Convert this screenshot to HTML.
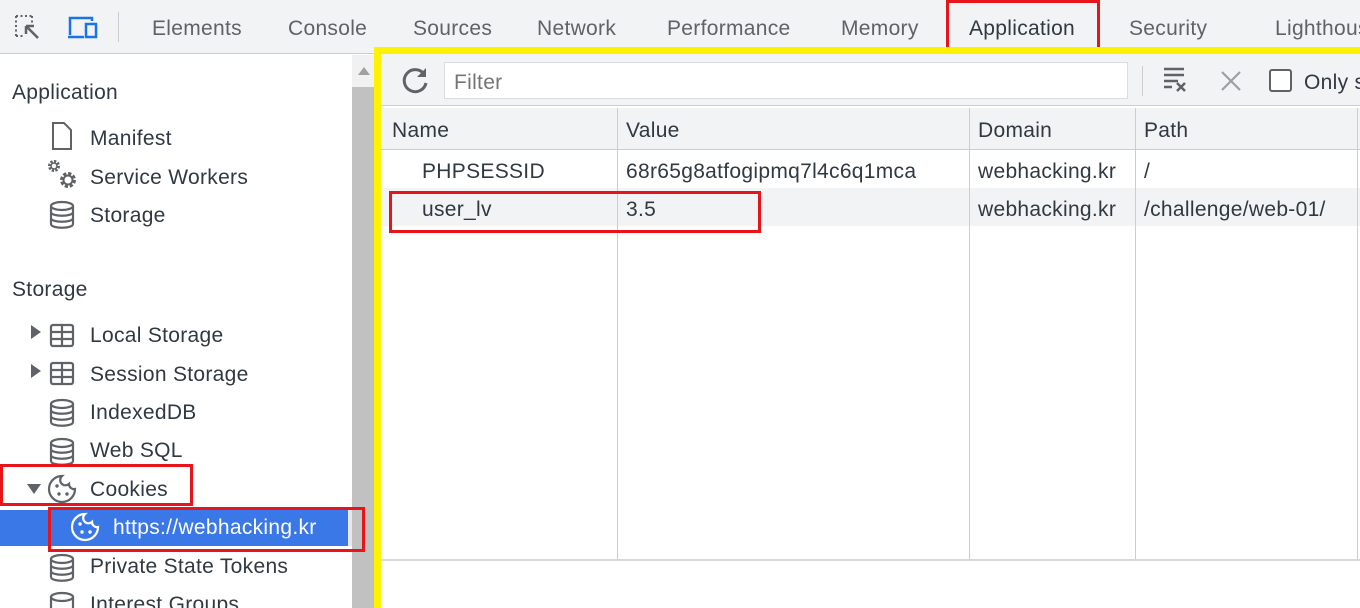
<!DOCTYPE html>
<html><head><style>
*{margin:0;padding:0;box-sizing:border-box}
html,body{width:1360px;height:608px;overflow:hidden}
body{background:#fff;font-family:"Liberation Sans",sans-serif;color:#303942;position:relative;font-size:21px;letter-spacing:0.3px}
.a{position:absolute;white-space:nowrap}
.tab{position:absolute;top:17px;font-size:21px;color:#5f6368}
.red{position:absolute;border:3px solid #e8141c}
svg{position:absolute}
</style></head><body>
<!-- top bar -->
<div class="a" style="left:0;top:0;width:1360px;height:54px;background:#f1f3f4;border-bottom:1px solid #cbcdd1"></div>
<svg style="left:14px;top:14px" width="30" height="28" viewBox="0 0 30 28"><path d="M2 2h16M2 2v20M2 22h8M18 2v8" stroke="#5f6368" stroke-width="2" stroke-dasharray="2 2.5" fill="none"/><path d="M12 12l12 12M12 12h8M12 12v8" stroke="#5f6368" stroke-width="2.5" fill="none"/></svg>
<svg style="left:66px;top:15px" width="34" height="26" viewBox="0 0 34 26"><path d="M4 20V3h22v3M2 22h16" stroke="#1a73e8" stroke-width="2.5" fill="none"/><rect x="20" y="9" width="10" height="13" stroke="#1a73e8" stroke-width="2.5" fill="none"/></svg>
<div class="a" style="left:118px;top:12px;width:1px;height:30px;background:#ccc"></div>
<div class="tab" style="left:152px">Elements</div>
<div class="tab" style="left:288px">Console</div>
<div class="tab" style="left:413px">Sources</div>
<div class="tab" style="left:537px">Network</div>
<div class="tab" style="left:667px">Performance</div>
<div class="tab" style="left:841px">Memory</div>
<div class="tab" style="left:969px;color:#303942">Application</div>
<div class="tab" style="left:1129px">Security</div>
<div class="tab" style="left:1275px">Lighthouse</div>
<div class="red" style="left:946px;top:0;width:154px;height:50px"></div>

<!-- sidebar -->
<div class="a" style="left:12px;top:81px">Application</div>
<svg style="left:50px;top:121px" width="24" height="30" viewBox="0 0 24 30"><path d="M3 2h11l7 7v19H3z" stroke="#5f6368" stroke-width="2" fill="none"/></svg>
<div class="a" style="left:90px;top:127px">Manifest</div>
<svg style="left:46px;top:158px" width="34" height="34" viewBox="0 0 34 34"><circle cx="8" cy="8" r="4.5" stroke="#5f6368" stroke-width="3" fill="none" stroke-dasharray="2.2 1.3"/><circle cx="8" cy="8" r="3" stroke="#5f6368" stroke-width="1.5" fill="none"/><circle cx="22" cy="22" r="6" stroke="#5f6368" stroke-width="4" fill="none" stroke-dasharray="3 1.7"/><circle cx="22" cy="22" r="4.5" stroke="#5f6368" stroke-width="2" fill="none"/></svg>
<div class="a" style="left:90px;top:166px">Service Workers</div>
<svg style="left:49px;top:200px" width="28" height="30" viewBox="0 0 28 30"><ellipse cx="13" cy="6" rx="11" ry="4" stroke="#5f6368" stroke-width="2.2" fill="none"/><path d="M2 6v18c0 5 22 5 22 0V6M2 12c0 5 22 5 22 0M2 18c0 5 22 5 22 0" stroke="#5f6368" stroke-width="2.2" fill="none"/></svg>
<div class="a" style="left:90px;top:204px">Storage</div>
<div class="a" style="left:12px;top:278px">Storage</div>
<svg style="left:30px;top:324px" width="12" height="16"><path d="M1 1l10 7-10 7z" fill="#5f6368"/></svg>
<svg style="left:49px;top:323px" width="28" height="26" viewBox="0 0 28 26"><rect x="2" y="2" width="22" height="21" rx="2" stroke="#5f6368" stroke-width="2.2" fill="none"/><path d="M2 9h22M2 16h22M13 2v21" stroke="#5f6368" stroke-width="2.2"/></svg>
<div class="a" style="left:90px;top:324px">Local Storage</div>
<svg style="left:30px;top:363px" width="12" height="16"><path d="M1 1l10 7-10 7z" fill="#5f6368"/></svg>
<svg style="left:49px;top:361px" width="28" height="26" viewBox="0 0 28 26"><rect x="2" y="2" width="22" height="21" rx="2" stroke="#5f6368" stroke-width="2.2" fill="none"/><path d="M2 9h22M2 16h22M13 2v21" stroke="#5f6368" stroke-width="2.2"/></svg>
<div class="a" style="left:90px;top:363px">Session Storage</div>
<svg style="left:49px;top:398px" width="28" height="30" viewBox="0 0 28 30"><ellipse cx="13" cy="6" rx="11" ry="4" stroke="#5f6368" stroke-width="2.2" fill="none"/><path d="M2 6v18c0 5 22 5 22 0V6M2 12c0 5 22 5 22 0M2 18c0 5 22 5 22 0" stroke="#5f6368" stroke-width="2.2" fill="none"/></svg>
<div class="a" style="left:90px;top:401px">IndexedDB</div>
<svg style="left:49px;top:437px" width="28" height="30" viewBox="0 0 28 30"><ellipse cx="13" cy="6" rx="11" ry="4" stroke="#5f6368" stroke-width="2.2" fill="none"/><path d="M2 6v18c0 5 22 5 22 0V6M2 12c0 5 22 5 22 0M2 18c0 5 22 5 22 0" stroke="#5f6368" stroke-width="2.2" fill="none"/></svg>
<div class="a" style="left:90px;top:439px">Web SQL</div>
<svg style="left:26px;top:483px" width="16" height="12"><path d="M1 1h14L8 11z" fill="#5f6368"/></svg>
<svg style="left:46px;top:473px" width="34" height="32" viewBox="0 0 34 32"><path d="M16 3a13 13 0 1 0 13 13 5 5 0 0 1-6-5 5 5 0 0 1-7-8z" stroke="#5f6368" stroke-width="2.2" fill="none"/><circle cx="11" cy="13" r="1.7" fill="#5f6368"/><circle cx="13" cy="21" r="1.7" fill="#5f6368"/><circle cx="21" cy="21" r="1.7" fill="#5f6368"/></svg>
<div class="a" style="left:90px;top:478px">Cookies</div>
<div class="a" style="left:0;top:510px;width:348px;height:36px;background:#3b78e7"></div>
<svg style="left:69px;top:511px" width="34" height="32" viewBox="0 0 34 32"><path d="M16 3a13 13 0 1 0 13 13 5 5 0 0 1-6-5 5 5 0 0 1-7-8z" stroke="#fff" stroke-width="2.2" fill="none"/><circle cx="11" cy="13" r="1.7" fill="#fff"/><circle cx="13" cy="21" r="1.7" fill="#fff"/><circle cx="21" cy="21" r="1.7" fill="#fff"/></svg>
<div class="a" style="left:113px;top:516px;color:#fff">https://webhacking.kr</div>
<svg style="left:49px;top:553px" width="28" height="30" viewBox="0 0 28 30"><ellipse cx="13" cy="6" rx="11" ry="4" stroke="#5f6368" stroke-width="2.2" fill="none"/><path d="M2 6v18c0 5 22 5 22 0V6M2 12c0 5 22 5 22 0M2 18c0 5 22 5 22 0" stroke="#5f6368" stroke-width="2.2" fill="none"/></svg>
<div class="a" style="left:90px;top:555px">Private State Tokens</div>
<svg style="left:49px;top:591px" width="28" height="30" viewBox="0 0 28 30"><ellipse cx="13" cy="6" rx="11" ry="4" stroke="#5f6368" stroke-width="2.2" fill="none"/><path d="M2 6v18c0 5 22 5 22 0V6" stroke="#5f6368" stroke-width="2.2" fill="none"/></svg>
<div class="a" style="left:90px;top:593px">Interest Groups</div>
<!-- scrollbar -->
<div class="a" style="left:352px;top:55px;width:22px;height:553px;background:#c1c1c1"></div>
<div class="a" style="left:352px;top:55px;width:22px;height:32px;background:#f1f1f1"></div>
<svg style="left:357px;top:66px" width="14" height="10"><path d="M1 9l6-8 6 8z" fill="#a0a0a0"/></svg>
<div class="a" style="left:348px;top:510px;width:4px;height:36px;background:#e8e8e8"></div>
<div class="red" style="left:0;top:464px;width:193px;height:42px"></div>
<div class="red" style="left:48px;top:507px;width:317px;height:45px"></div>

<!-- yellow frame -->
<div class="a" style="left:374px;top:47px;width:986px;height:561px;border:7px solid #fff200;border-right:none;border-bottom:none"></div>
<!-- toolbar -->
<div class="a" style="left:381px;top:54px;width:979px;height:52px;background:#f1f3f4;border-bottom:1px solid #cbcdd1"></div>
<svg style="left:398px;top:64px" width="34" height="34" viewBox="0 0 34 34"><path d="M26 10A11 11 0 1 0 28 19" stroke="#5f6368" stroke-width="3" fill="none"/><path d="M28 4v9h-9z" fill="#5f6368"/></svg>
<div class="a" style="left:444px;top:62px;width:684px;height:37px;background:#fff;border:1px solid #dadce0"></div>
<div class="a" style="left:454px;top:71px;color:#757575">Filter</div>
<div class="a" style="left:1142px;top:66px;width:1px;height:30px;background:#ccc"></div>
<svg style="left:1162px;top:66px" width="32" height="28" viewBox="0 0 32 28"><path d="M2 3h20M2 9h20M2 15h14M2 21h8" stroke="#5f6368" stroke-width="2.5"/><path d="M15 17l8 8M23 17l-8 8" stroke="#5f6368" stroke-width="2.5"/></svg>
<svg style="left:1220px;top:70px" width="22" height="22"><path d="M2 2l18 18M20 2L2 20" stroke="#9aa0a6" stroke-width="2.2"/></svg>
<div class="a" style="left:1269px;top:69px;width:23px;height:23px;border:2px solid #5f6368;border-radius:3px;background:#fff"></div>
<div class="a" style="left:1304px;top:71px">Only s</div>

<!-- table -->
<div class="a" style="left:381px;top:108px;width:979px;height:42px;background:#f1f3f4;border-bottom:1px solid #cbcdd1"></div>
<div class="a" style="left:381px;top:188px;width:979px;height:38px;background:#f1f3f4"></div>
<div class="a" style="left:617px;top:108px;width:1px;height:452px;background:#cbcdd1"></div>
<div class="a" style="left:969px;top:108px;width:1px;height:452px;background:#cbcdd1"></div>
<div class="a" style="left:1135px;top:108px;width:1px;height:452px;background:#cbcdd1"></div>
<div class="a" style="left:1357px;top:108px;width:1px;height:452px;background:#cbcdd1"></div>
<div class="a" style="left:381px;top:559px;width:979px;height:2px;background:#d5d7db"></div>
<div class="a" style="left:392px;top:119px">Name</div>
<div class="a" style="left:626px;top:119px">Value</div>
<div class="a" style="left:978px;top:119px">Domain</div>
<div class="a" style="left:1144px;top:119px">Path</div>
<div class="a" style="left:422px;top:160px">PHPSESSID</div>
<div class="a" style="left:626px;top:160px">68r65g8atfogipmq7l4c6q1mca</div>
<div class="a" style="left:978px;top:160px">webhacking.kr</div>
<div class="a" style="left:1144px;top:160px">/</div>
<div class="a" style="left:422px;top:198px">user_lv</div>
<div class="a" style="left:626px;top:198px">3.5</div>
<div class="a" style="left:978px;top:198px">webhacking.kr</div>
<div class="a" style="left:1144px;top:198px">/challenge/web-01/</div>
<div class="red" style="left:389px;top:191px;width:372px;height:42px"></div>
</body></html>
